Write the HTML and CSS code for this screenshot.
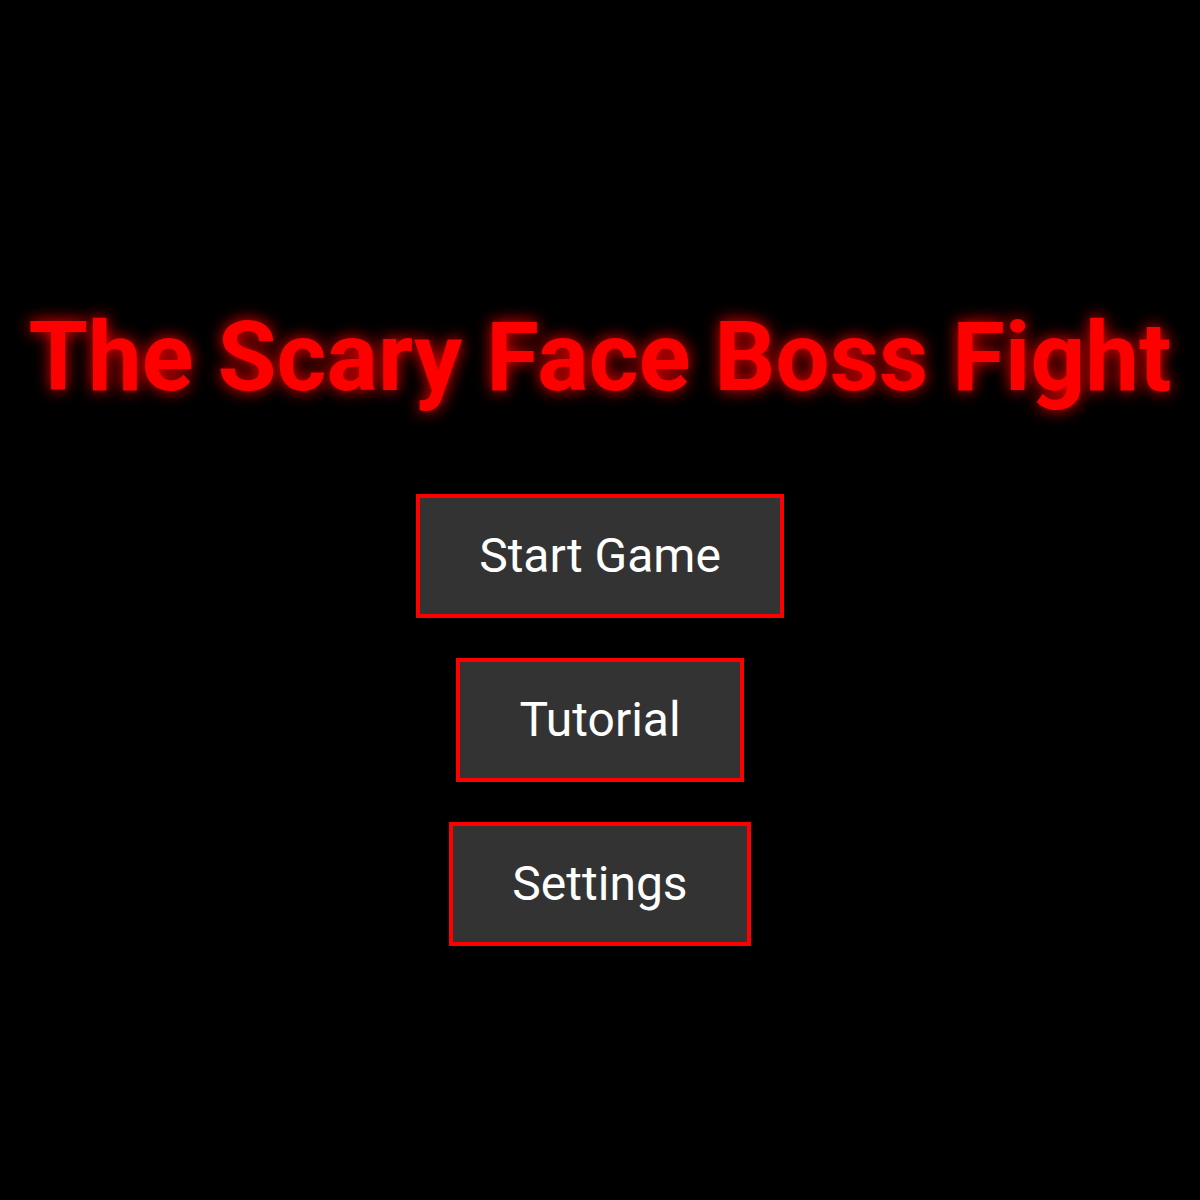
FILE: index.html
```html
<!DOCTYPE html>
<html>
<head>
<meta charset="utf-8">
<link rel="stylesheet" href="styles.css">
</head>
<body>
<main class="menu">
  <h1 class="title">The Scary Face Boss Fight</h1>
  <div class="buttons">
    <button class="btn">Start Game</button>
    <button class="btn">Tutorial</button>
    <button class="btn">Settings</button>
  </div>
</main>
</body>
</html>
```
FILE: styles.css
```css
html, body {
  margin: 0;
  padding: 0;
  background: #000;
  height: 100%;
}
body {
  font-family: Roboto, "Liberation Sans", sans-serif;
}
.menu {
  display: flex;
  flex-direction: column;
  align-items: center;
  padding-top: 301px;
}
.title {
  margin: 0 0 80px;
  font-size: 96px;
  font-weight: 700;
  line-height: 1.172;
  color: #ff0000;
  text-shadow: 0 0 16px #ff0000;
  white-space: nowrap;
}
.buttons {
  display: flex;
  flex-direction: column;
  align-items: center;
  gap: 40px;
}
.btn {
  font-family: Roboto, "Liberation Sans", sans-serif;
  font-size: 48px;
  line-height: 1.172;
  color: #fff;
  background: #333333;
  border: 4px solid #ff0000;
  padding: 30px 59.5px;
  margin: 0;
}
```
